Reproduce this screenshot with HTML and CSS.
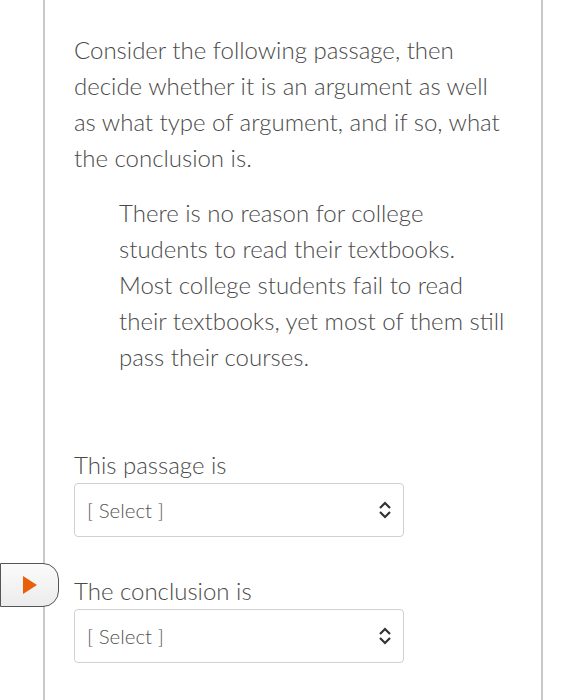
FILE: index.html
```html
<!DOCTYPE html>
<html>
<head>
<meta charset="utf-8">
<link rel="stylesheet" href="styles.css">
</head>
<body>
<div class="card">
  <p class="intro">Consider the following passage, then decide whether it is an argument as well as what type of argument, and if so, what the conclusion is.</p>
  <p class="quote">There is no reason for college students to read their textbooks. Most college students fail to read their textbooks, yet most of them still pass their courses.</p>
  <div class="field first">
    <div class="label">This passage is</div>
    <div class="select"><span>[ Select ]</span>
      <svg class="chev" width="14" height="18" viewBox="0 0 14 18"><path d="M2 7 L7 2 L12 7" fill="none" stroke="#333" stroke-width="2.2"/><path d="M2 11 L7 16 L12 11" fill="none" stroke="#333" stroke-width="2.2"/></svg>
    </div>
  </div>
  <div class="field second">
    <div class="label">The conclusion is</div>
    <div class="select"><span>[ Select ]</span>
      <svg class="chev" width="14" height="18" viewBox="0 0 14 18"><path d="M2 7 L7 2 L12 7" fill="none" stroke="#333" stroke-width="2.2"/><path d="M2 11 L7 16 L12 11" fill="none" stroke="#333" stroke-width="2.2"/></svg>
    </div>
  </div>
</div>
<div class="tab">
  <svg width="14" height="18" viewBox="0 0 14 18"><path d="M0 0 L14 9 L0 18 Z" fill="#e8600a"/></svg>
</div>
</body>
</html>
```
FILE: styles.css
```css
html, body {
  margin: 0;
  padding: 0;
  background: #fff;
}
body {
  font-family: Lato, "Liberation Sans", sans-serif;
  font-weight: 300;
  color: #4a4a4a;
}
.card {
  margin-left: 43px;
  width: 438px;
  min-height: 700px;
  border-left: 2px solid #c9c9c9;
  border-right: 2px solid #c9c9c9;
  padding: 32px 29px 0 29px;
  box-sizing: content-box;
}
.intro {
  margin: 0;
  font-size: 24px;
  line-height: 36px;
}
.quote {
  margin: 19px 0 0 45px;
  font-size: 24px;
  line-height: 36px;
}
.field.first {
  margin-top: 72px;
}
.field.second {
  margin-top: 36px;
}
.label {
  font-size: 24px;
  line-height: 36px;
}
.select {
  width: 330px;
  height: 54px;
  border: 1px solid #d0d0d0;
  border-radius: 4px;
  display: flex;
  align-items: center;
  justify-content: space-between;
  padding: 0 11px 0 12px;
  box-sizing: border-box;
  font-size: 20.5px;
  color: #555;
}
.tab {
  position: absolute;
  left: 0;
  top: 563px;
  width: 59px;
  height: 44px;
  box-sizing: border-box;
  border: 1.5px solid #555;
  border-radius: 0 16px 16px 0;
  background: linear-gradient(#fbfbfb, #ececec);
  display: flex;
  align-items: center;
  justify-content: center;
  z-index: 2;
}
```
